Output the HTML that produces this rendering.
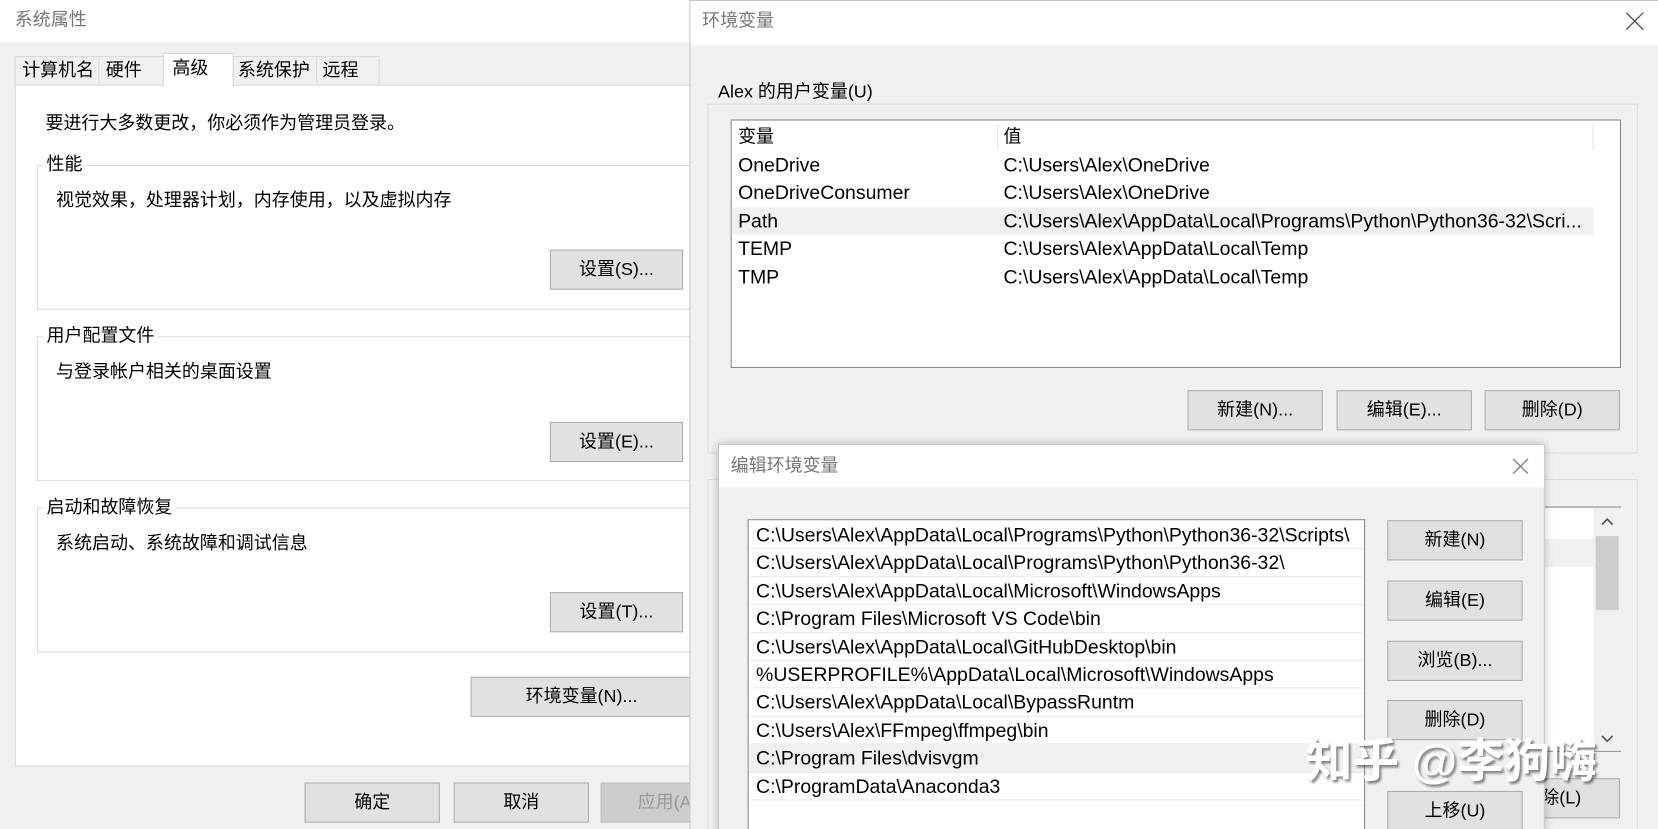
<!DOCTYPE html>
<html><head><meta charset="utf-8"><style>
*{margin:0;padding:0;box-sizing:border-box}
html,body{width:1658px;height:829px;overflow:hidden;background:#f0f0f0}
#w{position:absolute;left:0;top:0;width:1568px;height:784px;transform:scale(1.0574);transform-origin:0 0;font-family:"Liberation Sans","Noto Sans CJK SC",sans-serif;font-size:17px;color:#000;overflow:hidden}
.a{position:absolute}
.t{position:absolute;white-space:nowrap;line-height:20px}
.L{font-size:18.4px}
.btn{position:absolute;background:#e1e1e1;border:1px solid #adadad;text-align:center;font-size:17px;line-height:35px;white-space:nowrap;overflow:hidden}
.gb{position:absolute;border:1px solid #dcdcdc}
.gl{position:absolute;background:#fff;padding:0 3px;line-height:20px;white-space:nowrap}
.win{position:absolute;background:#f0f0f0;border:1px solid #c8c8c8}
.title{position:absolute;left:0;top:0;right:0;background:#fff;color:#777;font-size:17px}
.row{position:absolute;left:0;right:0;height:26.4px;border-bottom:1px solid #eaeaea;padding-left:7px;line-height:26px;white-space:nowrap;font-size:18.4px}
</style></head><body><div id="w">

<div class="win" style="left:0;top:0;width:660px;height:800px;border:none">
<div class="title" style="height:40px"><span class="t" style="left:14px;top:9px">系统属性</span></div>
<div class="a" style="left:14px;top:80px;width:660px;height:645px;background:#fff;border:1px solid #d9d9d9"></div>
<div class="a" style="left:14px;top:53px;width:80px;height:28px;border:1px solid #d9d9d9;background:#f0f0f0"></div>
<div class="t" style="left:21px;top:57px">计算机名</div>
<div class="a" style="left:93px;top:53px;width:62px;height:28px;border:1px solid #d9d9d9;background:#f0f0f0"></div>
<div class="t" style="left:100px;top:57px">硬件</div>
<div class="a" style="left:154px;top:50px;width:67px;height:32px;border:1px solid #d9d9d9;border-bottom:none;background:#fff"></div>
<div class="t" style="left:163px;top:55px">高级</div>
<div class="a" style="left:220px;top:53px;width:80px;height:28px;border:1px solid #d9d9d9;background:#f0f0f0"></div>
<div class="t" style="left:225px;top:57px">系统保护</div>
<div class="a" style="left:299px;top:53px;width:60px;height:28px;border:1px solid #d9d9d9;background:#f0f0f0"></div>
<div class="t" style="left:305px;top:57px">远程</div>
<div class="t" style="left:43px;top:107px">要进行大多数更改，你必须作为管理员登录。</div>

<div class="gb" style="left:35px;top:156px;width:640px;height:137px"></div>
<div class="gl" style="left:41px;top:146px">性能</div>
<div class="t" style="left:53px;top:180px">视觉效果，处理器计划，内存使用，以及虚拟内存</div>
<div class="btn" style="left:520px;top:236px;width:126px;height:38px">设置(S)...</div>

<div class="gb" style="left:35px;top:318px;width:640px;height:137px"></div>
<div class="gl" style="left:41px;top:308px">用户配置文件</div>
<div class="t" style="left:53px;top:342px">与登录帐户相关的桌面设置</div>
<div class="btn" style="left:520px;top:399px;width:126px;height:38px">设置(E)...</div>

<div class="gb" style="left:35px;top:480px;width:640px;height:137px"></div>
<div class="gl" style="left:41px;top:470px">启动和故障恢复</div>
<div class="t" style="left:53px;top:504px">系统启动、系统故障和调试信息</div>
<div class="btn" style="left:520px;top:560px;width:126px;height:38px">设置(T)...</div>

<div class="btn" style="left:445px;top:640px;width:220px;height:38px;padding-right:10px">环境变量(N)...</div>
<div class="btn" style="left:288px;top:740px;width:128px;height:38px">确定</div>
<div class="btn" style="left:429px;top:740px;width:128px;height:38px">取消</div>
<div class="btn" style="left:568px;top:740px;width:128px;height:38px;color:#999;background:#ccc;border-color:#bfbfbf;text-align:left;padding-left:34px">应用(A)</div>
</div>

<div class="win" style="left:652px;top:0;width:920px;height:800px">
<div class="title" style="height:42px"><span class="t" style="left:11px;top:9px">环境变量</span>
<svg class="a" style="left:884px;top:10px" width="18" height="18"><path d="M1 1L17 17M17 1L1 17" stroke="#555" stroke-width="1.3"/></svg></div>
<div class="gb" style="left:16px;top:97px;width:880px;height:331px"></div>
<div class="gl" style="left:23px;top:76px;background:#f0f0f0">Alex 的用户变量(U)</div>
<div class="a" style="left:38px;top:112px;width:842px;height:235px;background:#fff;border:1px solid #828790">
 <div class="a" style="left:251px;top:2px;width:1px;height:26px;background:#e5e5e5"></div>
 <div class="a" style="left:814px;top:2px;width:1px;height:26px;background:#e5e5e5"></div>
 <div class="t" style="left:6px;top:6px">变量</div><div class="t" style="left:257px;top:6px">值</div>
 <div class="a" style="left:0;top:82px;width:815px;height:26px;background:#f0f0f0"></div>
 <div class="t L" style="left:6px;top:32px">OneDrive</div><div class="t L" style="left:257px;top:32px">C:\Users\Alex\OneDrive</div>
 <div class="t L" style="left:6px;top:58px">OneDriveConsumer</div><div class="t L" style="left:257px;top:58px">C:\Users\Alex\OneDrive</div>
 <div class="t L" style="left:6px;top:85px">Path</div><div class="t L" style="left:257px;top:85px">C:\Users\Alex\AppData\Local\Programs\Python\Python36-32\Scri...</div>
 <div class="t L" style="left:6px;top:111px">TEMP</div><div class="t L" style="left:257px;top:111px">C:\Users\Alex\AppData\Local\Temp</div>
 <div class="t L" style="left:6px;top:138px">TMP</div><div class="t L" style="left:257px;top:138px">C:\Users\Alex\AppData\Local\Temp</div>
</div>
<div class="btn" style="left:470px;top:368px;width:128px;height:38px">新建(N)...</div>
<div class="btn" style="left:611px;top:368px;width:128px;height:38px">编辑(E)...</div>
<div class="btn" style="left:751px;top:368px;width:128px;height:38px">删除(D)</div>
<div class="gb" style="left:16px;top:452px;width:880px;height:360px"></div>
<div class="a" style="left:38px;top:478px;width:842px;height:232px;background:#fff;border:1px solid #828790">
 <div class="a" style="left:0;top:30px;width:815px;height:26px;background:#f0f0f0"></div>
 <div class="a" style="left:815px;top:0;width:26px;height:230px;background:#f0f0f0"></div>
 <div class="a" style="left:817px;top:27px;width:22px;height:70px;background:#cdcdcd"></div>
 <svg class="a" style="left:821px;top:8px" width="14" height="10"><path d="M2 8L7 3L12 8" stroke="#555" stroke-width="1.6" fill="none"/></svg>
 <svg class="a" style="left:821px;top:214px" width="14" height="10"><path d="M2 2L7 7L12 2" stroke="#555" stroke-width="1.6" fill="none"/></svg>
</div>
<div class="btn" style="left:751px;top:735px;width:128px;height:38px">删除(L)</div>
</div>

<div class="win" style="left:679px;top:420px;width:782px;height:400px;box-shadow:0 0 8px rgba(0,0,0,.25)">
<div class="title" style="height:40px"><span class="t" style="left:11px;top:10px">编辑环境变量</span>
<svg class="a" style="left:750px;top:12px" width="16" height="16"><path d="M1 1L15 15M15 1L1 15" stroke="#777" stroke-width="1.2"/></svg></div>
<div class="a" style="left:27px;top:70px;width:584px;height:330px;background:#fff;border:1px solid #828790;overflow:hidden">
 <div class="row" style="top:1px">C:\Users\Alex\AppData\Local\Programs\Python\Python36-32\Scripts\</div>
 <div class="row" style="top:27.4px">C:\Users\Alex\AppData\Local\Programs\Python\Python36-32\</div>
 <div class="row" style="top:53.8px">C:\Users\Alex\AppData\Local\Microsoft\WindowsApps</div>
 <div class="row" style="top:80.2px">C:\Program Files\Microsoft VS Code\bin</div>
 <div class="row" style="top:106.6px">C:\Users\Alex\AppData\Local\GitHubDesktop\bin</div>
 <div class="row" style="top:133px">%USERPROFILE%\AppData\Local\Microsoft\WindowsApps</div>
 <div class="row" style="top:159.4px">C:\Users\Alex\AppData\Local\BypassRuntm</div>
 <div class="row" style="top:185.8px">C:\Users\Alex\FFmpeg\ffmpeg\bin</div>
 <div class="row" style="top:212.2px;background:#f0f0f0">C:\Program Files\dvisvgm</div>
 <div class="row" style="top:238.6px">C:\ProgramData\Anaconda3</div>
</div>
<div class="btn" style="left:632px;top:71px;width:128px;height:38px">新建(N)</div>
<div class="btn" style="left:632px;top:128px;width:128px;height:38px">编辑(E)</div>
<div class="btn" style="left:632px;top:185px;width:128px;height:38px">浏览(B)...</div>
<div class="btn" style="left:632px;top:241px;width:128px;height:38px">删除(D)</div>
<div class="btn" style="left:632px;top:327px;width:128px;height:38px">上移(U)</div>
</div>

<div class="t" style="left:1235px;top:696px;font-size:44px;line-height:50px;color:#fff;font-weight:bold;text-shadow:2px 2px 2px rgba(0,0,0,.45)">知乎 @李狗嗨</div>
</div></body></html>
